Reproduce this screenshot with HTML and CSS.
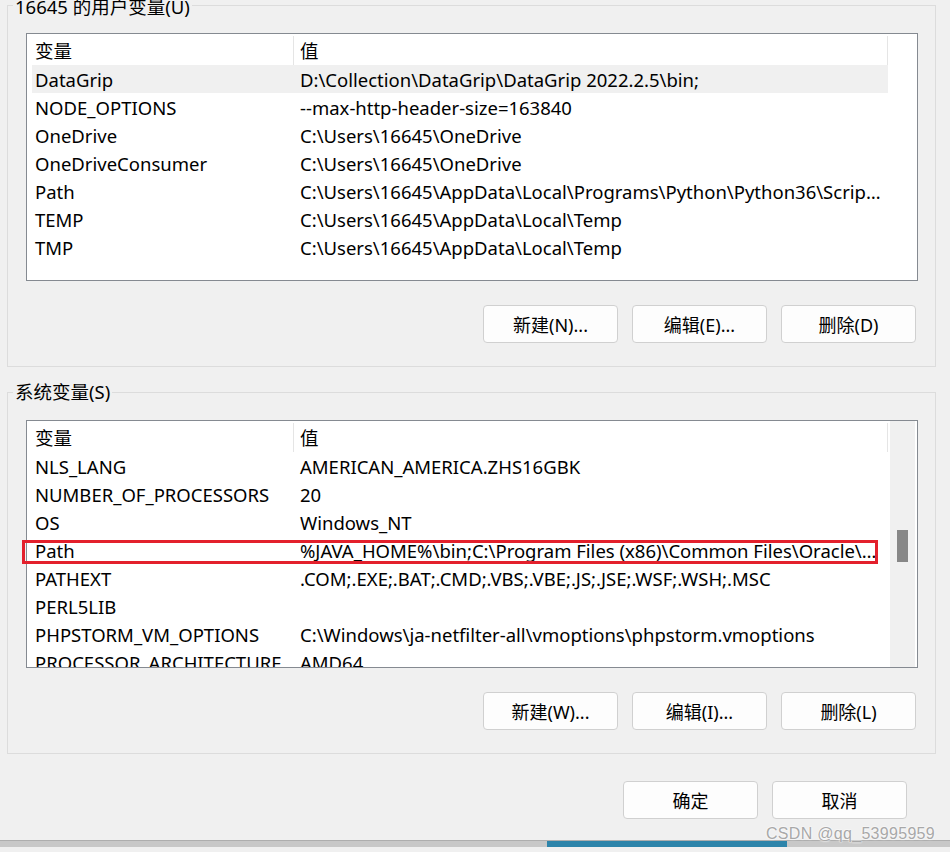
FILE: index.html
```html
<!DOCTYPE html>
<html lang="zh-CN">
<head>
    <meta charset="UTF-8">
    <meta name="viewport" content="width=device-width, initial-scale=1.0">
    <title>环境变量</title>
    <link rel="stylesheet" href="styles.css">
</head>
<body>
    <div class="dialog">
        <!-- 用户变量 -->
        <fieldset class="group first">
            <legend>16645 的用户变量(U)</legend>
            <div class="list">
                <div class="rows">
                    <div class="list-head">
                        <div class="cell name">变量</div>
                        <div class="cell value">值</div>
                    </div>
                    <div class="row selected"><div class="cell name">DataGrip</div><div class="cell value">D:\Collection\DataGrip\DataGrip 2022.2.5\bin;</div></div>
                    <div class="row"><div class="cell name">NODE_OPTIONS</div><div class="cell value">--max-http-header-size=163840</div></div>
                    <div class="row"><div class="cell name">OneDrive</div><div class="cell value">C:\Users\16645\OneDrive</div></div>
                    <div class="row"><div class="cell name">OneDriveConsumer</div><div class="cell value">C:\Users\16645\OneDrive</div></div>
                    <div class="row"><div class="cell name">Path</div><div class="cell value">C:\Users\16645\AppData\Local\Programs\Python\Python36\Scripts\;C:\Users\16645\AppData\Local\Programs\Python\Python36\</div></div>
                    <div class="row"><div class="cell name">TEMP</div><div class="cell value">C:\Users\16645\AppData\Local\Temp</div></div>
                    <div class="row"><div class="cell name">TMP</div><div class="cell value">C:\Users\16645\AppData\Local\Temp</div></div>
                </div>
            </div>
            <div class="actions">
                <button class="button">新建(N)...</button>
                <button class="button">编辑(E)...</button>
                <button class="button">删除(D)</button>
            </div>
        </fieldset>

        <!-- 系统变量 -->
        <fieldset class="group second">
            <legend>系统变量(S)</legend>
            <div class="list">
                <div class="rows">
                    <div class="list-head">
                        <div class="cell name">变量</div>
                        <div class="cell value">值</div>
                    </div>
                    <div class="row"><div class="cell name">NLS_LANG</div><div class="cell value">AMERICAN_AMERICA.ZHS16GBK</div></div>
                    <div class="row"><div class="cell name">NUMBER_OF_PROCESSORS</div><div class="cell value">20</div></div>
                    <div class="row"><div class="cell name">OS</div><div class="cell value">Windows_NT</div></div>
                    <div class="row"><div class="cell name">Path</div><div class="cell value">%JAVA_HOME%\bin;C:\Program Files (x86)\Common Files\Oracle\Java\javapath;C:\Windows\system32</div></div>
                    <div class="row"><div class="cell name">PATHEXT</div><div class="cell value">.COM;.EXE;.BAT;.CMD;.VBS;.VBE;.JS;.JSE;.WSF;.WSH;.MSC</div></div>
                    <div class="row"><div class="cell name">PERL5LIB</div><div class="cell value"></div></div>
                    <div class="row"><div class="cell name">PHPSTORM_VM_OPTIONS</div><div class="cell value">C:\Windows\ja-netfilter-all\vmoptions\phpstorm.vmoptions</div></div>
                    <div class="row"><div class="cell name">PROCESSOR_ARCHITECTURE</div><div class="cell value">AMD64</div></div>
                </div>
                <div class="scrollbar"><div class="thumb"></div></div>
                <!-- 标注框 -->
                <div class="mark"></div>
            </div>
            <div class="actions">
                <button class="button">新建(W)...</button>
                <button class="button">编辑(I)...</button>
                <button class="button">删除(L)</button>
            </div>
        </fieldset>

        <div class="footer">
            <button class="button">确定</button>
            <button class="button">取消</button>
        </div>
    </div>

    <div class="taskbar"><div class="progress"></div></div>
    <div class="watermark">CSDN @qq_53995959</div>
</body>
</html>
```

FILE: styles.css
```css
body {
    margin: 0;
    padding: 0;
    background: #f0f0f0;
    color: #000;
    font-family: 'Noto Sans', 'Noto Sans CJK SC', sans-serif;
    font-size: 18.5px;
    width: 950px;
    height: 852px;
    overflow: hidden;
    position: relative;
}

.dialog {
    padding: 0 14px 0 7px;
}

/* 分组框 */
.group {
    margin: 0;
    border: 1px solid #dcdcdc;
    padding: 16px 17px 23px 18px;
}

.group.first {
    margin-top: -7px;
}

.group.second {
    margin-top: 13px;
}

.group legend {
    padding: 0 2px;
    margin-left: -13px;
    line-height: 24px;
}

.group.first legend {
    position: relative;
    top: 2px;
}

/* 列表 */
.list {
    position: relative;
    display: flex;
    height: 246px;
    background: #fff;
    border: 1px solid #858a91;
    padding-left: 5px;
}

.rows {
    width: 856px;
    overflow: hidden;
}

.list-head,
.row {
    display: grid;
    grid-template-columns: 262px 594px;
    align-items: center;
}

.list-head {
    height: 30px;
    padding-top: 1px;
}

.list-head .cell {
    height: 29px;
    line-height: 29px;
    border-right: 1px solid #e5e5e5;
}

.row {
    height: 28px;
}

.row.selected {
    background: #f0f0f0;
}

.cell {
    white-space: nowrap;
    overflow: hidden;
    text-overflow: ellipsis;
}

.cell.name {
    padding-left: 3px;
}

.cell.value {
    padding: 0 6px 0 6px;
}

.group.second .cell.value {
    padding-right: 8px;
}

.scrollbar {
    margin-left: 2px;
    width: 25px;
    background: #f0f0f0;
    display: flex;
    flex-direction: column;
    align-items: center;
}

.thumb {
    margin-top: 109px;
    width: 11px;
    height: 32px;
    background: #878787;
}

.mark {
    position: absolute;
    left: -5px;
    top: 119px;
    width: 850px;
    height: 18px;
    border: 3px solid #e3202c;
    pointer-events: none;
}

/* 按钮 */
.actions,
.footer {
    display: flex;
    justify-content: flex-end;
    gap: 14px;
}

.actions {
    margin-top: 24px;
    margin-right: 2px;
}

.footer {
    margin-top: 27px;
    padding-right: 29px;
}

.button {
    width: 135px;
    height: 38px;
    background: #fdfdfd;
    border: 1px solid #d0d0d0;
    border-radius: 4px;
    font-family: inherit;
    font-size: 18px;
    color: #000;
    padding: 0;
}

/* 底部条 */
.taskbar {
    margin-top: 21px;
    height: 6px;
    border-top: 1px solid #aeaeae;
    background: #c8c8c8;
    padding-left: 547px;
}

.progress {
    width: 240px;
    height: 6px;
    background: #2d84aa;
}

.watermark {
    position: absolute;
    right: 15px;
    bottom: 9px;
    font-family: 'Liberation Sans', sans-serif;
    font-size: 16px;
    letter-spacing: 0.3px;
    color: #a8a8a8;
    text-shadow: 0 0 2px #fff, 0 0 2px #fff;
}
```
